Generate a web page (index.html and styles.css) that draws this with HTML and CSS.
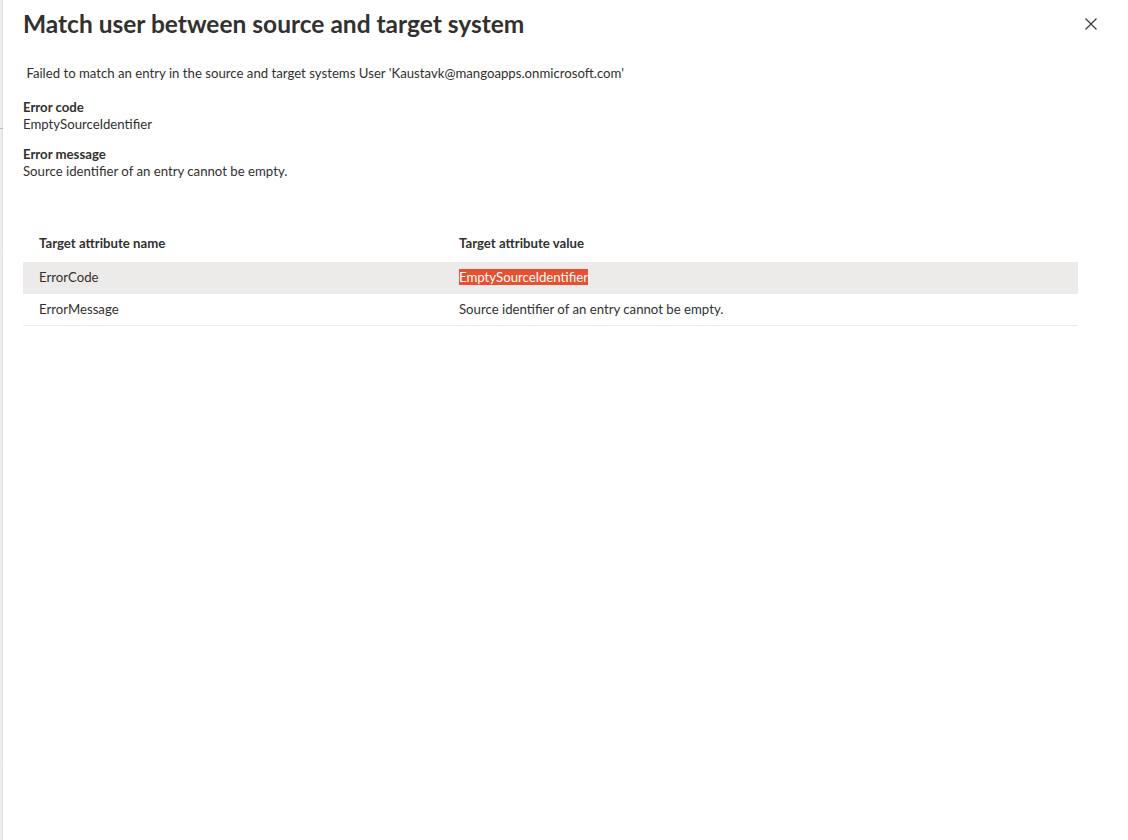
FILE: index.html
```html
<!DOCTYPE html>
<html lang="en">
<head>
    <meta charset="UTF-8">
    <title>Match user between source and target system</title>
    <link rel="stylesheet" href="styles.css">
</head>
<body>
    <div class="backdrop"><span class="backdrop-line"></span></div>
    <div class="panel">
        <div class="panel-header">
            <h1>Match user between source and target system</h1>
            <button class="close" aria-label="Close">
                <svg width="12" height="12" viewBox="0 0 12 12"><path d="M0.5 0.5 L11.5 11.5 M11.5 0.5 L0.5 11.5" stroke="#333" stroke-width="1.1" fill="none"/></svg>
            </button>
        </div>
        <p class="summary">&nbsp;Failed to match an entry in the source and target systems User 'Kaustavk@mangoapps.onmicrosoft.com'</p>
        <div class="field">
            <div class="field-label">Error code</div>
            <div class="field-value">EmptySourceIdentifier</div>
        </div>
        <div class="field">
            <div class="field-label">Error message</div>
            <div class="field-value">Source identifier of an entry cannot be empty.</div>
        </div>

        <table class="attr-table">
            <thead>
                <tr><th class="col-name">Target attribute name</th><th>Target attribute value</th></tr>
            </thead>
            <tbody>
                <tr class="selected"><td>ErrorCode</td><td><span class="hl">EmptySourceIdentifier</span></td></tr>
                <tr><td>ErrorMessage</td><td>Source identifier of an entry cannot be empty.</td></tr>
            </tbody>
        </table>
    </div>
</body>
</html>
```

FILE: styles.css
```css
html, body { margin: 0; height: 100%; }
body { font-family: Lato, "Open Sans", sans-serif; color: #323130; background: #fff; display: flex; }
.backdrop { width: 3px; flex: none; background: linear-gradient(to right, #f0f0f0, #e2e2e2); position: relative; }
.backdrop-line { position: absolute; left: 0; top: 128px; width: 3px; height: 1px; background: #bbb; }
.panel { flex: 1; padding: 0 50px 0 20px; box-sizing: border-box; }
.panel-header { display: flex; justify-content: space-between; align-items: flex-start; }
h1 { font-size: 24.5px; font-weight: 700; margin: 8px 0 0; line-height: 32px; color: #323130; }
.close { background: none; border: none; padding: 0; margin: 18px -19px 0 0; cursor: pointer; display: flex; }
.summary { font-size: 13.2px; margin: 24px 0 0; line-height: 18px; }
.field { margin-top: 17px; font-size: 13.2px; line-height: 17px; }
.field + .field { margin-top: 13px; }
.field-label { font-weight: 700; }
.attr-table { width: 100%; border-collapse: collapse; margin-top: 47px; font-size: 13.2px; }
.attr-table th { text-align: left; font-weight: 700; padding: 7px 16px 9px; line-height: 19px; }
.attr-table th.col-name { width: 388px; }
.attr-table td { padding: 7px 16px 7px; line-height: 17px; border-bottom: 1px solid #edebe9; }
.attr-table tr.selected td { background: #edebe9; }
.hl { background: #e8512f; color: #fff; }
```
